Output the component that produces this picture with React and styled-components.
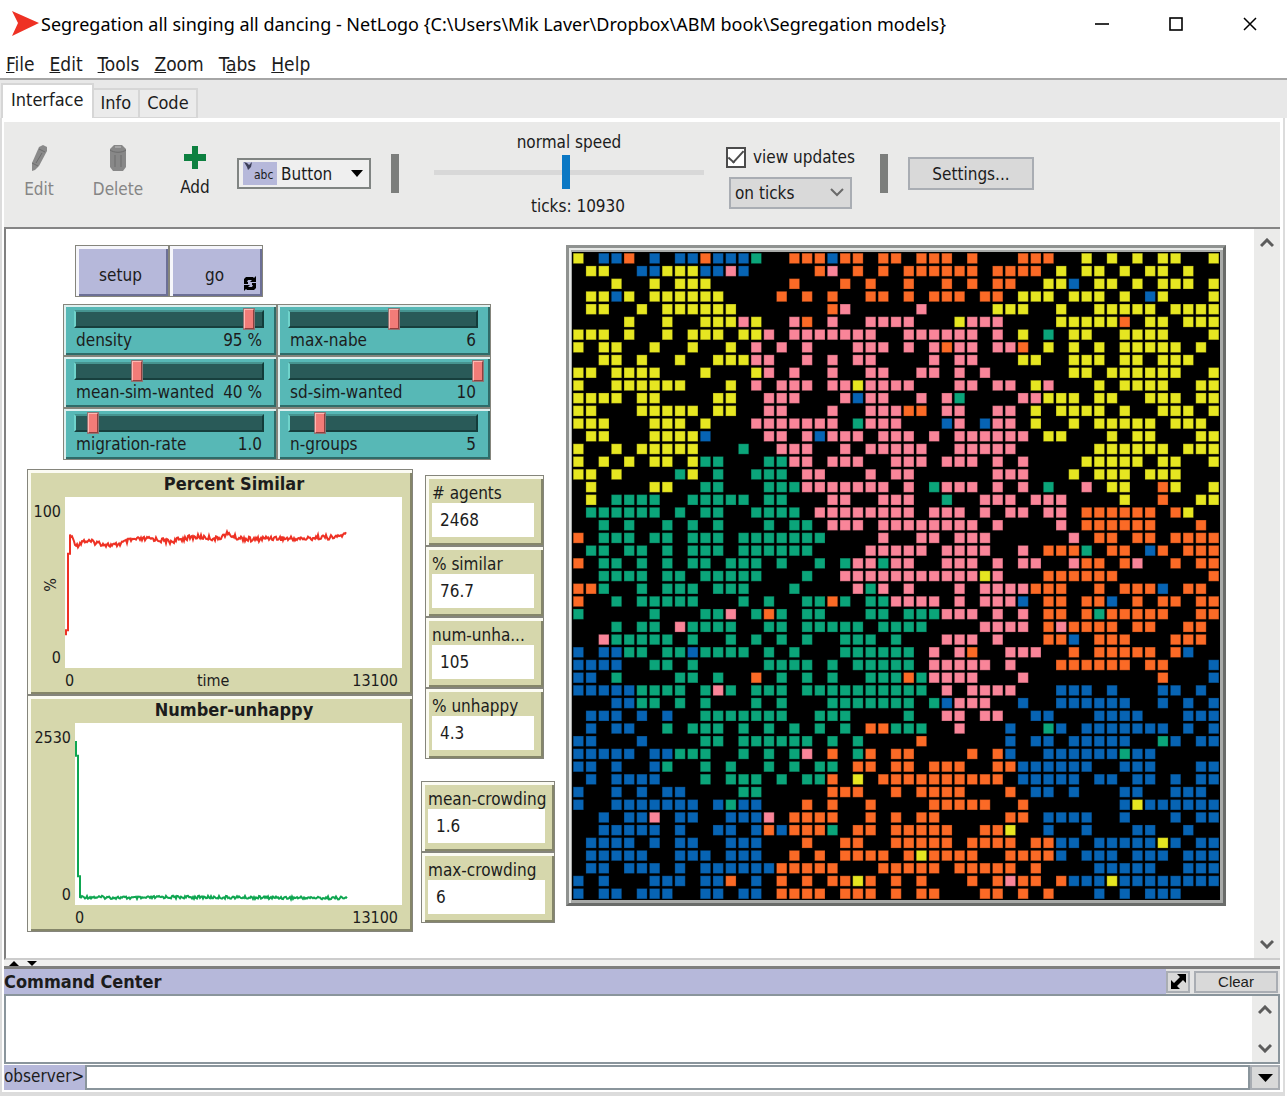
import React from "react";
import styled, { createGlobalStyle, css } from "styled-components";

const uiFont = '"DejaVu Sans Condensed", "Noto Sans", sans-serif';
const titleFont = '"Noto Sans", "Open Sans", sans-serif';

const GlobalStyle = createGlobalStyle`
  * { box-sizing: border-box; }
  body {
    margin: 0;
    background: #ffffff;
    color: #1c1c1c;
    font: 17px/20px ${uiFont};
  }
  button, input, select, textarea {
    font: inherit;
    color: inherit;
    margin: 0;
    padding: 0;
    border: 0;
    border-radius: 0;
    background: none;
    outline: none;
  }
`;

const INK = "#1c1c1c";
const LILAC = "#b6b8da";
const SAND = "#d6d7ac";
const TEAL = "#57b8b6";

const raised = (light, dark) => css`
  border: 1px solid #85857c;
  box-shadow: inset 3px 3px 0 ${light}, inset -2px -2px 0 ${dark};
`;

/* ---------- window chrome ---------- */

const Window = styled.div`
  min-height: 100vh;
  display: flex;
  flex-direction: column;
`;

const TitleBar = styled.header`
  height: 48px;
  display: flex;
  align-items: center;
  padding: 0 28px 0 12px;
`;

const Title = styled.h1`
  margin: 0;
  flex: 1;
  font: 400 18px/24px ${titleFont};
  color: #000;
  white-space: nowrap;
`;

const WindowButtons = styled.div`
  display: flex;
  gap: 56px;
`;

const IconButton = styled.button`
  display: flex;
  align-items: center;
  justify-content: center;
`;

const MenuBar = styled.nav`
  height: 32px;
  display: flex;
  align-items: center;
  gap: 15px;
  padding: 2px 0 0 6px;
  border-bottom: 2px solid #a6a6a6;
`;

const MenuItem = styled.button`
  font-size: 19px;
`;

const TabStrip = styled.div`
  height: 38px;
  display: flex;
  align-items: flex-end;
  padding: 3px 0 0 1px;
  background: #e8e8e8;
`;

const Tab = styled.button`
  height: ${(p) => (p.$active ? 35 : 30)}px;
  padding: ${(p) => (p.$active ? "0 8px 4px" : "0 7px 2px")};
  font-size: 18px;
  background: ${(p) => (p.$active ? "#ffffff" : "#ebebeb")};
  border: 2px solid #d6d6d6;
  border-bottom-width: ${(p) => (p.$active ? 0 : 1)}px;
  border-left-width: ${(p) => (p.$active ? 2 : 0)}px;
`;

const Body = styled.main`
  flex: 1;
  display: flex;
  flex-direction: column;
  padding: 4px 3px 2px 2px;
  border: 2px solid #dcdcdc;
  border-width: 0 2px 4px;
  margin-right: 2px;
`;

/* ---------- toolbar ---------- */

const Toolbar = styled.div`
  height: 107px;
  display: flex;
  align-items: center;
  padding: 0 0 2px 5px;
  background: #eaeae9;
  border-bottom: 2px solid #858585;
`;

const ToolButton = styled.button`
  width: ${(p) => p.$width}px;
  margin: 0 10px 4px 0;
  display: flex;
  flex-direction: column;
  align-items: center;
  gap: 8px;
  color: ${(p) => (p.$muted ? "#858585" : INK)};
`;

const WidgetPicker = styled.label`
  width: 134px;
  height: 31px;
  margin-left: 4px;
  padding: 2px 2px 2px 4px;
  display: flex;
  align-items: center;
  gap: 4px;
  border: 2px solid #808482;
  background: #efefef;
`;

const WidgetBadge = styled.span`
  width: 34px;
  height: 23px;
  display: flex;
  align-items: flex-start;
  background: ${LILAC};
  font-size: 12px;
  line-height: 26px;
`;

const FlatSelect = styled.select`
  appearance: none;
  flex: 1;
  min-width: 0;
`;

const Separator = styled.span`
  width: 8px;
  height: 39px;
  margin: 0 ${(p) => p.$after}px 0 ${(p) => p.$before}px;
  background: #7c7e7c;
`;

const Speed = styled.label`
  width: 270px;
  display: flex;
  flex-direction: column;
  align-items: center;
`;

const SpeedRange = styled.input`
  appearance: none;
  width: 100%;
  height: 34px;
  margin: 4px 0 6px;
  &::-webkit-slider-runnable-track {
    height: 5px;
    background: #d8d8d8;
  }
  &::-webkit-slider-thumb {
    appearance: none;
    width: 8px;
    height: 34px;
    margin-top: -15px;
    background: #0b78c4;
  }
`;

const Ticks = styled.span`
  padding-left: 18px;
`;

const Updates = styled.div`
  width: 130px;
  margin: 8px 0 0 22px;
  display: flex;
  flex-direction: column;
  gap: 9px;
`;

const CheckLabel = styled.label`
  display: flex;
  align-items: center;
  gap: 7px;
  white-space: nowrap;
`;

const CheckBox = styled.input`
  appearance: none;
  width: 20px;
  height: 21px;
  border: 2px solid #4c4c4c;
  background: #fff;
  display: grid;
  place-items: center;
  &:checked::after {
    content: "";
    width: 14px;
    height: 6px;
    margin-top: -4px;
    border: solid #4c4c4c;
    border-width: 0 0 2px 2px;
    transform: rotate(-48deg);
  }
`;

const GreySelect = styled.label`
  width: 123px;
  height: 32px;
  margin-left: 3px;
  padding: 0 6px 0 4px;
  display: flex;
  align-items: center;
  border: 2px solid #a9adb3;
  background: #d9d9d9;
`;

const GreyButton = styled.button`
  width: ${(p) => p.$width}px;
  height: ${(p) => p.$height}px;
  display: flex;
  align-items: center;
  justify-content: center;
  border: 2px solid #a9adb3;
  background: #d9d9d9;
`;

const ClearButton = styled(GreyButton)`
  font: 15px/18px "Liberation Sans", Arial, sans-serif;
`;

/* ---------- model canvas ---------- */

const Viewport = styled.section`
  flex: 1;
  display: flex;
  border-left: 2px solid #808080;
  border-bottom: 2px solid #cccccc;
`;

const Canvas = styled.div`
  flex: 1;
  display: flex;
  align-items: flex-start;
  gap: 11px;
  padding: 16px 0 24px 21px;
`;

const ScrollRail = styled.div`
  width: 26px;
  display: flex;
  flex-direction: column;
  justify-content: space-between;
  padding: 9px 6px;
  background: #ebebea;
`;

const Widgets = styled.div`
  width: 528px;
  display: flex;
  flex-direction: column;
`;

const ButtonRow = styled.div`
  display: flex;
  padding-left: 48px;
`;

const ModelButton = styled.button`
  position: relative;
  width: 94px;
  height: 52px;
  padding: 7px 3px 0 0;
  background: ${LILAC};
  ${raised("#f6f6fb", "#6c6f96")}
`;

const ForeverMark = styled.span`
  position: absolute;
  right: 5px;
  bottom: 5px;
  display: flex;
`;

const SliderGrid = styled.div`
  width: 428px;
  display: grid;
  grid-template-columns: 1fr 1fr;
  grid-auto-rows: 52px;
  margin: 7px 0 9px 36px;
`;

const SliderBox = styled.label`
  display: flex;
  flex-direction: column;
  gap: 2px;
  padding: 5px 12px 0 10px;
  background: ${TEAL};
  border: 1px solid #85857c;
  box-shadow: inset 2px 2px 0 #dff0ef, inset -2px -2px 0 #2f6b68;
`;

const SliderTrack = styled.span`
  height: 18px;
  display: flex;
  background: #295a58;
  border: 2px solid;
  border-color: #469490 #123c3a #173f3d #6fd3cb;
`;

const SliderRange = styled.input`
  appearance: none;
  flex: none;
  width: calc(100% + 16px);
  height: 22px;
  margin: -4px -8px;
  &::-webkit-slider-thumb {
    appearance: none;
    width: 12px;
    height: 22px;
    background: #f27c78;
    border: 2px solid;
    border-color: #ffb9b3 #8e3f3e #8e3f3e #ffb9b3;
    outline: 1px solid #8d7474;
    outline-offset: -1px;
  }
`;

const Spread = styled.span`
  display: flex;
  justify-content: space-between;
  padding: 0 ${(p) => p.$inset || 0}px;
  white-space: nowrap;
`;

const Lower = styled.div`
  display: flex;
  gap: 8px;
  align-items: flex-start;
`;

const Plots = styled.div`
  width: 386px;
`;

const PlotPanel = styled.figure`
  margin: 0;
  height: ${(p) => p.$height}px;
  display: grid;
  grid-template-columns: ${(p) => p.$gutter}px 1fr;
  grid-template-rows: 27px 1fr 26px;
  padding-right: 10px;
  background: ${SAND};
  ${raised("#fbfbf2", "#85866a")}
`;

const PlotTitle = styled.figcaption`
  grid-column: 1 / -1;
  padding: 4px 0 0 38px;
  font-size: 18px;
  font-weight: 700;
  text-align: center;
`;

const YAxis = styled.div`
  display: flex;
  flex-direction: column;
  justify-content: space-between;
  align-items: flex-end;
  padding: 5px 4px 0 0;
  font-size: 16px;
`;

const YName = styled.span`
  writing-mode: vertical-rl;
  transform: rotate(180deg);
`;

const XAxis = styled.div`
  grid-column: 2;
  display: flex;
  justify-content: space-between;
  padding: 3px 4px 0 0;
  font-size: 16px;
`;

const Chart = styled.svg`
  width: 100%;
  height: 100%;
  background: #fff;
  display: block;
`;

const Monitors = styled.div`
  display: flex;
  flex-direction: column;
  gap: 22px;
  padding-top: 6px;
`;

const MonitorGroup = styled.div`
  width: ${(p) => p.$width}px;
  margin-left: ${(p) => p.$indent}px;
`;

const MonitorBox = styled.div`
  height: 71px;
  display: flex;
  flex-direction: column;
  padding: 7px 9px 8px 6px;
  background: ${SAND};
  ${raised("#fbfbf2", "#85866a")}
`;

const MonitorName = styled.label`
  height: 22px;
  white-space: nowrap;
`;

const MonitorValue = styled.output`
  flex: 1;
  padding: 7px 8px;
  background: #fff;
`;

const WorldFrame = styled.div`
  padding: 4px 3px 3px;
  background: #a8aaa8;
  border: 3px solid;
  border-color: #8f9290 #6a6c6a #6a6c6a #8f9290;
  box-shadow: inset 2px 2px 0 #e6e8e6;
`;

/* ---------- command center ---------- */

const SplitBar = styled.div`
  height: 6px;
  display: flex;
  align-items: flex-end;
  gap: 8px;
  padding-left: 5px;
  background: #efefef;
`;

const CommandHeader = styled.div`
  height: 28px;
  display: flex;
  align-items: center;
  gap: 4px;
  padding-right: 2px;
  background: linear-gradient(to right, ${LILAC} calc(100% - 114px), #e4e4e4 0);
  border-top: 3px solid #7e7e7e;
`;

const CommandTitle = styled.h2`
  flex: 1;
  margin: 0;
  font: inherit;
  font-size: 18px;
  font-weight: 700;
`;

const OutputArea = styled.div`
  height: 70px;
  display: flex;
  border: 2px solid #8a959c;
`;

const OutputText = styled.textarea`
  flex: 1;
  resize: none;
`;

const PromptRow = styled.div`
  height: 26px;
  display: flex;
  padding-top: 1px;
`;

const PromptLabel = styled.label`
  padding: 1px 1px 0 0;
  background: ${LILAC};
`;

const PromptInput = styled.input`
  flex: 1;
  border: 2px solid #8a959c;
  background: #fff;
`;

/* ---------- drawings ---------- */

const Chevron = ({ up }) => (
  <svg width="14" height="10" viewBox="0 0 14 10">
    <path d={up ? "M1 8 7 2l6 6" : "M1 2l6 6 6-6"} fill="none" stroke="#5c5c5c" strokeWidth="3" />
  </svg>
);

const Triangle = ({ up, width = 12, height = 7 }) => (
  <svg width={width} height={height} viewBox="0 0 12 7" preserveAspectRatio="none">
    <path d={up ? "M0 7 6 0l6 7z" : "M0 0h12L6 7z"} fill="#000" />
  </svg>
);

const Logo = () => (
  <svg width="29" height="26" viewBox="0 0 29 26">
    <path d="M0 0 27 12 0 25l6-13z" fill="#ee3124" />
  </svg>
);

const Pencil = () => (
  <svg width="18" height="26" viewBox="0 0 18 26">
    <path d="M9 2 13 0l4 2v4L9 21l-4 4-3 1 0-8z" fill="#8a8a8a" />
    <path d="M9 4l6 3M2 18l6 3M12 8 6 18" stroke="#6d6d6d" strokeWidth="1" fill="none" />
  </svg>
);

const Can = () => (
  <svg width="18" height="27" viewBox="0 0 18 27">
    <path d="M1 5 5 1h8l4 4v18l-3 4H4l-3-4z" fill="#888" />
    <path d="M1 6c4 3 12 3 16 0M6 11v12M12 11v12" stroke="#6c6c6c" fill="none" />
    <path d="M6 3h6" stroke="#c4c4c4" strokeWidth="1" />
  </svg>
);

const Plus = () => (
  <svg width="22" height="23" viewBox="0 0 22 23">
    <path d="M8 0h6v8h8v7h-8v8H8v-8H0V8h8z" fill="#0d8040" />
  </svg>
);

const Cycle = () => (
  <svg width="14" height="15" viewBox="0 0 14 15">
    <path d="M1 6V3l2-2h7l1 1 2-2v6H7l2-2H5L4 6z" fill="#000" />
    <path d="M13 9v3l-2 2H4l-1-1-2 2V9h6l-2 2h4l1-2z" fill="#000" />
    <path d="M1 6h4v2H1zM9 7h4v2H9z" fill="#000" />
  </svg>
);

const Expand = () => (
  <svg width="15" height="15" viewBox="0 0 15 15">
    <path d="M6 0h9v9l-3-3-6 6 3 3H0V6l3 3 6-6z" fill="#000" />
  </svg>
);

/* ---------- agents ---------- */

const PATCH_COLORS = { Y: "#e6e621", B: "#0764b4", O: "#fb6a26", G: "#0ba57a", P: "#f98599" };

const WORLD = `Y0 B2,3 O4 B6,8,9 O10 B11-13 G14 O17-19 B20 O21,22,24,25,27-29,31,35-37 Y40,42,44,46,47,50
Y1,2 B5,6 Y7-9 B10,11 P12 B13 O19 P20 O22,24,26-31,33-36 Y38,40,41,43,45,46,48
Y3,6,8-10 O17,21,23,26,29,31,33,34 Y37,38 B39 Y41,42,44,46-48,50
Y1,2 B3 Y4,6-11 O16,18,20,23,24,26,28-30,32,33 Y35-37,39-41,43 B45 Y46,50
Y1,2,5,7-12 O20 P21,27 Y33-35,38,41-45,47-50
Y4,7,10-12 P13 Y14 P17 O18 P20,23-26 Y30 P31-33 Y38-42 O43 Y45,46,48-50
Y0-2,4,7,9-11,13,14 P15,17-23,26-31,33 Y35 G37 Y39,40,43-46,50
Y0,2,3,6,9,12 P14,16,18,22-24,26,28 O29 P30,31,33,34 O35 Y37,39,41,43-47,49
Y2,3,5,8,11-13 P14,15,18,20,22,23,28,30,31 Y35,36,39-41,43,44,46-48
Y0,1,3-6,10,14 P15,17,20,23,24,27,28,30,32 Y39,40,42-47,50
Y0,3-8,12 P14,16-18,20,21 Y22 P23-26,30,31,33,34 Y36 P37 Y41,43-46,49,50
Y0-3,5,6,11,12 P15-17,21 B22 P23,24,27,29 G30 P35,36 Y37-39,41,42,45-47,49,50
Y0,1,5-9,11,12 P15,16,20,23-25 O26,27 P29,30,33,34 Y36,38-41,43,46-48,50
Y0-2,6-8,10 P14-20 G22 P23-25 B29 P30 B32 P33,34 Y36,39,41-45,47-49
Y1,2,6-9 B10 P15,16,18 B19 P20-22,24-26,28,30-35 Y37,38,42,44,45,49,50
Y0,3,5-9 G13 P16-18,21,23-27,30-34 Y41-46,48-50
Y0,2,4,6,7,9 G10,11,15,16 P17,18,20-22,25-27,29-31,33,35 Y40-44,46,47,50
Y0,1,3 G8 Y9 G11,14-16 P18,19,23,25,26,33-35 Y39,41-43,45-47
Y1,6,7 G10,11,15-17 P18-24,26 G28 P29-31,33,35 G37 P40 Y42,43 O46 Y47,50
Y1 G3-6,9-13,15,16 P20,21,24-26 G29 P32-34,36-38 Y43 O46 Y49,50
G1-6,8,10,11,14-17 P19-26,28-30,32,34,35,37,38 O40-45,47 Y48
G2,4,7,9,11,15,17,18 P20-22,24-31,33,38 O40-45,49
O0 G2-4,6,7,9-11,13-19 P24,27,28,30-32,39 O41,42,44,45,47-50
G1,2,4,5,7,9-11,13-18 P23-27,29-32,35 O37-39 G40 O42,43 B45 O46,48-50
O0 G2,3,5,7,9,10,12-14,16,19,21 P22,23 G24 P25,26,29-31,33,35,36,39 O40,41,43 P44 O47,49,50
G2-5,7,8,10-14,18 P21-31 Y32 P33 O37-42,50
O0,1 G2,5,7-9,11-13,17 P22 G23 P24,26,30,32-35 O36-38,41,43-45 B46 O48,49
O0 G3,5-9,13,15,18,19 O20 G21,23,24 P25-28,30,32-34 B35 O37,38,40,41 B42 O44,46,47,49,50
G0,6,10,11 P12 G14 O15 G16,18,19,23,24,26-28 P29-31,33,35 O37,38,40 G41 O42-46,49,50
G3,5,6 P8 G9-12,15,16,18-22,24-27 P32-35 O37 P38 O39-42,44,45,48,49
P2 G3-7,9,12,14,16,18,21-23,25 P29-31,33 O37,38 B39 O41-43,47-49
B0,2,3 G4,5,7,8 B9 G10-13,15,17,21-26 P28,30 O31 P34-36 O39,41-45,47 B48
B0-3 G6,7,9,15-18,20,22-26 P28-32,34 O38-43,45,46 B50
B0,1 G3,8,9,11 O14 G16,18,20,23-25 O26 G27 P28-31,35 O46 B50
B0-4 G5-8,10 P11 G12,14-16,18-27 P29,31-34 B38-40,42,46,47,49
B3,4 G5,6,8,10,14,16,20-26,28 B29 P30-32 B35,38-43,46,48,50
B1-3,5,7 G10-16,19-21,26 P29,30,32,33 B36,37,41-44,48-50
B1,3,4 G7,9-11,13,15,17,19,21 O23,24 G25-27 P30 B34 G37 B38,40-46,48,50
B0,1,5 G10,11,13-18,20,22 O27 B34,36,37,39-43 G46 B47,49,50
B0-4,6,7 G8-10,13,15,17 P18 O20 G22 O23,25,26,31,33 B34,37-42 G43 B44,45
B0,1,3,6 G7,10,12,15,17,19,20 O22,23,25,26,28-30,33,34 B35-40,43-45,49,50
B1,3-6 G10,12-14,16,18,19 O20 Y22 O24-33 B35-39,41,42,44,45,47,49,50
B0,3,5,7,8 G13,14 O20-22,25,27-30,34 B36,37,39,43,44,47-49
B0,3-9,11 G12 B13,14 O18,20,23,28-32,35 B43 Y44 B45-50
B2,4,5 P6 B8,9,12-14 P15 O17-20,23,25,27,28,34,35 B37-40,43,47,49,50
B2-6,8,11,12,14 O15 B16 O17-19 G20 O22,23,25-29,32,33 Y34 B37,40,44,45,48
B1-4,6,8,9,12-14 O18,21,22,25-29,31-34,36,37 B38,39,41-45 Y46 B47,49,50
B1-5,8-10,12-14 O17,19,21-24,26 Y27 O28-31,34-37 B38,40-42,44-46,48-50
B1,2,4-6,8,10-15 O16-20,24-28,30-34,36 B41-45,48-50
B0,2,6-8,10,11 O12 B14 O16,18,20,21 Y22 O23,25,27,31,33 P34 O35,36,38 B39-41 Y42 B43-50
B0,2,3,5-7,10,11,13,14 O16-19,21-23,25,27,28,32,33,35,37 B41,43,45-47`;

const PITCH = 648 / 51;

const agents = WORLD.split("\n").flatMap((line, row) =>
  line.split(" ").flatMap((group) =>
    group
      .slice(1)
      .split(",")
      .flatMap((part) => {
        const [from, to = from] = part.split("-").map(Number);
        return Array.from({ length: to - from + 1 }, (_, i) => ({
          row,
          col: from + i,
          color: PATCH_COLORS[group[0]],
        }));
      })
  )
);

const World = () => (
  <WorldFrame>
    <svg width="648" height="648" viewBox="0 0 648 648" style={{ display: "block" }} role="img" aria-label="World view">
      <rect width="648" height="648" fill="#000" />
      {agents.map(({ row, col, color }) => (
        <rect
          key={`${row}-${col}`}
          x={col * PITCH + 1.2}
          y={row * PITCH + 1.2}
          width="10.4"
          height="10.4"
          fill={color}
          stroke="#000"
          strokeOpacity="0.25"
          strokeWidth="1"
        />
      ))}
    </svg>
  </WorldFrame>
);

/* ---------- plots ---------- */

const jitter = (i) => {
  const v = Math.sin(i * 12.9898) * 43758.5453;
  return v - Math.floor(v) - 0.5;
};

const trace = (knots, noise) => {
  const points = [];
  for (let k = 0; k < knots.length - 1; k += 1) {
    const [x0, y0] = knots[k];
    const [x1, y1] = knots[k + 1];
    for (let x = x0; x < x1; x += 1) {
      points.push(`${x},${(y0 + ((y1 - y0) * (x - x0)) / (x1 - x0) + jitter(x) * noise).toFixed(1)}`);
    }
  }
  return points.join(" ");
};

const similarLine =
  "1,139 1,134 3,134 3,57 5,57 " +
  trace(
    [[5, 38], [12, 49], [18, 44], [32, 46], [48, 49], [58, 46], [68, 43], [88, 42], [105, 45], [122, 41], [135, 40], [152, 42], [162, 37], [172, 41], [188, 43], [205, 41], [222, 42], [242, 42], [255, 40], [268, 41], [282, 37]],
    5
  );

const unhappyLine = "1,18 1,33 3,33 3,154 5,154 5,175 " + trace([[6, 175], [68, 176], [88, 175], [273, 176]], 3);

/* ---------- composed parts ---------- */

const Slider = ({ name, value, shown, min = 0, max }) => (
  <SliderBox>
    <SliderTrack>
      <SliderRange type="range" min={min} max={max} step="any" defaultValue={value} />
    </SliderTrack>
    <Spread $inset={2}>
      <span>{name}</span>
      <span>{shown || value}</span>
    </Spread>
  </SliderBox>
);

const Monitor = ({ id, name, value }) => (
  <MonitorBox>
    <MonitorName htmlFor={id}>{name}</MonitorName>
    <MonitorValue id={id}>{value}</MonitorValue>
  </MonitorBox>
);

const Menu = ({ before = "", hot, after }) => (
  <MenuItem>
    {before}
    <u>{hot}</u>
    {after}
  </MenuItem>
);

export default function App() {
  return (
    <Window>
      <GlobalStyle />
      <TitleBar>
        <Logo />
        <Title>Segregation all singing all dancing - NetLogo {"{C:\\Users\\Mik Laver\\Dropbox\\ABM book\\Segregation models}"}</Title>
        <WindowButtons>
          <IconButton aria-label="Minimize">
            <svg width="18" height="18" viewBox="0 0 18 18"><path d="M2 9h14" stroke="#000" strokeWidth="1.6" /></svg>
          </IconButton>
          <IconButton aria-label="Maximize">
            <svg width="18" height="18" viewBox="0 0 18 18"><rect x="3" y="3" width="12" height="12" fill="none" stroke="#000" strokeWidth="1.6" /></svg>
          </IconButton>
          <IconButton aria-label="Close">
            <svg width="18" height="18" viewBox="0 0 18 18"><path d="m3 3 12 12M15 3 3 15" stroke="#000" strokeWidth="1.5" /></svg>
          </IconButton>
        </WindowButtons>
      </TitleBar>

      <MenuBar>
        <Menu hot="F" after="ile" />
        <Menu hot="E" after="dit" />
        <Menu hot="T" after="ools" />
        <Menu hot="Z" after="oom" />
        <Menu before="T" hot="a" after="bs" />
        <Menu hot="H" after="elp" />
      </MenuBar>

      <TabStrip>
        <Tab $active>Interface</Tab>
        <Tab>Info</Tab>
        <Tab>Code</Tab>
      </TabStrip>

      <Body>
        <Toolbar>
          <ToolButton $width={60} $muted><Pencil />Edit</ToolButton>
          <ToolButton $width={78} $muted><Can />Delete</ToolButton>
          <ToolButton $width={56}><Plus />Add</ToolButton>
          <WidgetPicker>
            <WidgetBadge>
              <svg width="11" height="9" viewBox="0 0 11 9"><path d="M1 0 4 1l2 2 3-3-1 5-3 3-1-3z" fill="#3c3f58" /></svg>
              abc
            </WidgetBadge>
            <FlatSelect aria-label="Widget type"><option>Button</option></FlatSelect>
            <Triangle />
            <span />
          </WidgetPicker>
          <Separator $before={20} $after={35} />
          <Speed>
            normal speed
            <SpeedRange type="range" min="0" max="100" defaultValue="49" />
            <Ticks>ticks: 10930</Ticks>
          </Speed>
          <Updates>
            <CheckLabel><CheckBox type="checkbox" defaultChecked />view updates</CheckLabel>
            <GreySelect>
              <FlatSelect aria-label="Update mode"><option>on ticks</option></FlatSelect>
              <svg width="14" height="9" viewBox="0 0 14 9"><path d="m1 1 6 6 6-6" fill="none" stroke="#6a6a6a" strokeWidth="2" /></svg>
            </GreySelect>
          </Updates>
          <Separator $before={24} $after={20} />
          <GreyButton $width={126} $height={33}>Settings...</GreyButton>
        </Toolbar>

        <Viewport>
          <Canvas>
            <Widgets>
              <ButtonRow>
                <ModelButton>setup</ModelButton>
                <ModelButton>go<ForeverMark><Cycle /></ForeverMark></ModelButton>
              </ButtonRow>
              <SliderGrid>
                <Slider name="density" value={95} shown="95 %" max={103} />
                <Slider name="max-nabe" value={6} min={1} max={10} />
                <Slider name="mean-sim-wanted" value={40} shown="40 %" max={120} />
                <Slider name="sd-sim-wanted" value={10} max={10} />
                <Slider name="migration-rate" value={1} shown="1.0" max={10} />
                <Slider name="n-groups" value={5} min={2} max={20} />
              </SliderGrid>
              <Lower>
                <Plots>
                  <PlotPanel $height={226} $gutter={37}>
                    <PlotTitle>Percent Similar</PlotTitle>
                    <YAxis><span>100</span><YName>%</YName><span>0</span></YAxis>
                    <Chart viewBox="0 0 337 172" preserveAspectRatio="none">
                      <polyline points={similarLine} fill="none" stroke="#ee3124" strokeWidth="2" />
                    </Chart>
                    <XAxis><span>0</span><span>time</span><span>13100</span></XAxis>
                  </PlotPanel>
                  <PlotPanel $height={237} $gutter={47}>
                    <PlotTitle>Number-unhappy</PlotTitle>
                    <YAxis><span>2530</span><span>0</span></YAxis>
                    <Chart viewBox="0 0 327 183" preserveAspectRatio="none">
                      <polyline points={unhappyLine} fill="none" stroke="#0fa651" strokeWidth="2" />
                    </Chart>
                    <XAxis><span>0</span><span>13100</span></XAxis>
                  </PlotPanel>
                </Plots>
                <Monitors>
                  <MonitorGroup $width={119} $indent={4}>
                    <Monitor id="agents" name="# agents" value="2468" />
                    <Monitor id="similar" name="% similar" value="76.7" />
                    <Monitor id="num-unhappy" name="num-unha..." value="105" />
                    <Monitor id="pct-unhappy" name="% unhappy" value="4.3" />
                  </MonitorGroup>
                  <MonitorGroup $width={134} $indent={0}>
                    <Monitor id="mean-crowding" name="mean-crowding" value="1.6" />
                    <Monitor id="max-crowding" name="max-crowding" value="6" />
                  </MonitorGroup>
                </Monitors>
              </Lower>
            </Widgets>
            <World />
          </Canvas>
          <ScrollRail>
            <IconButton aria-label="Scroll up"><Chevron up /></IconButton>
            <IconButton aria-label="Scroll down"><Chevron /></IconButton>
          </ScrollRail>
        </Viewport>

        <SplitBar>
          <Triangle up width={10} height={5} />
          <Triangle width={10} height={5} />
        </SplitBar>
        <CommandHeader>
          <CommandTitle>Command Center</CommandTitle>
          <GreyButton $width={24} $height={22} aria-label="Expand"><Expand /></GreyButton>
          <ClearButton $width={84} $height={22}>Clear</ClearButton>
        </CommandHeader>
        <OutputArea>
          <OutputText aria-label="Output" readOnly />
          <ScrollRail>
            <IconButton aria-label="Scroll output up"><Chevron up /></IconButton>
            <IconButton aria-label="Scroll output down"><Chevron /></IconButton>
          </ScrollRail>
        </OutputArea>
        <PromptRow>
          <PromptLabel htmlFor="prompt">observer&gt;</PromptLabel>
          <PromptInput id="prompt" type="text" />
          <GreyButton $width={30} $height={25} aria-label="History"><Triangle width={15} height={8} /></GreyButton>
        </PromptRow>
      </Body>
    </Window>
  );
}
